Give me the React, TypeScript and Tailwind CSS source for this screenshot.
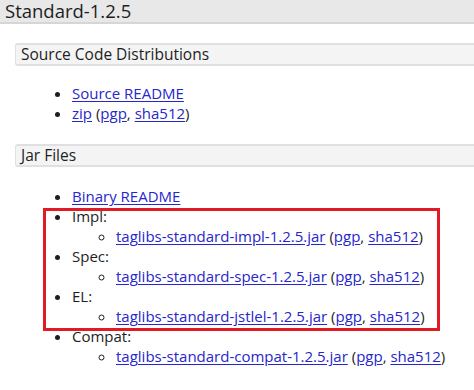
export default function App() {
  const link = "text-[#2626cc] underline underline-offset-2";
  const jars = [
    { label: "Impl:", file: "taglibs-standard-impl-1.2.5.jar" },
    { label: "Spec:", file: "taglibs-standard-spec-1.2.5.jar" },
    { label: "EL:", file: "taglibs-standard-jstlel-1.2.5.jar" },
    { label: "Compat:", file: "taglibs-standard-compat-1.2.5.jar" },
  ];

  return (
    <div className="relative w-[474px] h-[390px] overflow-hidden bg-white text-[#1e1e1e] font-['Open_Sans',sans-serif]">
      {/* page title bar */}
      <div className="h-[24px] bg-[#e8e8e8] border-b-2 border-[#d6d6d6] pl-[5px] text-[18.5px] leading-[22px] text-[#1e1e1e]">
        Standard-1.2.5
      </div>

      <div className="pl-[15px] pt-[19px]">
        <div className="h-[23px] bg-[#f4f4f4] border-t-2 border-b-2 border-l border-[#e0e0e0] rounded-l-[3px] pl-[5px] text-[15.5px] leading-[19px]">
          Source Code Distributions
        </div>

        <ul className="list-disc pl-[57px] mt-[17px] text-[15px] leading-[20px]">
          <li>
            <a className={link}>Source README</a>
          </li>
          <li>
            <a className={link}>zip</a> (<a className={link}>pgp</a>,{" "}
            <a className={link}>sha512</a>)
          </li>
        </ul>

        <div className="mt-[21px] h-[23px] bg-[#f4f4f4] border-t-2 border-b-2 border-l border-[#e0e0e0] rounded-l-[3px] pl-[5px] text-[15.5px] leading-[19px]">
          Jar Files
        </div>

        <ul className="list-disc pl-[57px] mt-[19px] text-[15px] leading-[20px]">
          <li>
            <a className={link}>Binary README</a>
          </li>
          {jars.map((j) => (
            <li key={j.file}>
              {j.label}
              <ul className="list-[circle] pl-[44px]">
                <li>
                  <a className={link}>{j.file}</a> (<a className={link}>pgp</a>,{" "}
                  <a className={link}>sha512</a>)
                </li>
              </ul>
            </li>
          ))}
        </ul>
      </div>

      {/* red highlight annotation */}
      <div className="absolute left-[43px] top-[208px] w-[397px] h-[123px] border-[3px] border-[#e01b24] pointer-events-none" />
    </div>
  );
}
